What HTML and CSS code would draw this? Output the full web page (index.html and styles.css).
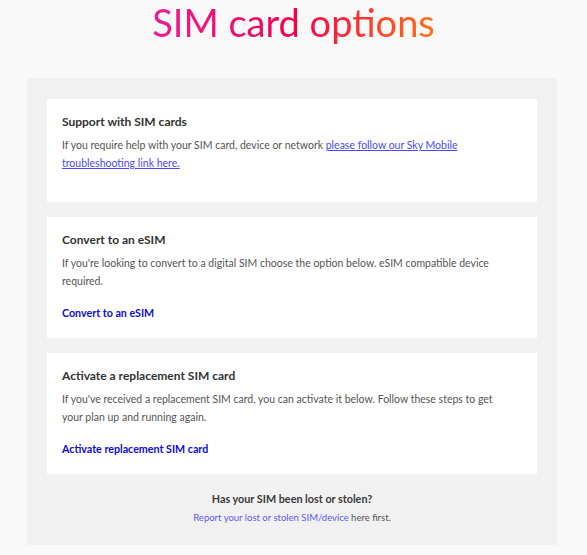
FILE: index.html
```html
<!DOCTYPE html>
<html lang="en">
<head>
<meta charset="utf-8">
<title>SIM card options</title>
<link rel="stylesheet" href="styles.css">
</head>
<body>
<div class="page">
  <h1 class="title">SIM card options</h1>
  <div class="panel">
    <section class="card">
      <h2 class="card-title">Support with SIM cards</h2>
      <p class="card-text">If you require help with your SIM card, device or network <a class="inline-link" href="#">please follow our Sky Mobile troubleshooting link here.</a></p>
    </section>
    <section class="card">
      <h2 class="card-title">Convert to an eSIM</h2>
      <p class="card-text">If you're looking to convert to a digital SIM choose the option below. eSIM compatible device required.</p>
      <a class="action-link" href="#">Convert to an eSIM</a>
    </section>
    <section class="card">
      <h2 class="card-title">Activate a replacement SIM card</h2>
      <p class="card-text">If you've received a replacement SIM card, you can activate it below. Follow these steps to get your plan up and running again.</p>
      <a class="action-link" href="#">Activate replacement SIM card</a>
    </section>
    <div class="lost">
      <h3 class="lost-title">Has your SIM been lost or stolen?</h3>
      <p class="lost-text"><a class="lost-link" href="#">Report your lost or stolen SIM/device</a> here first.</p>
    </div>
  </div>
</div>
</body>
</html>
```
FILE: styles.css
```css
html, body {
  margin: 0;
  padding: 0;
  background: #f9f9f9;
}
body {
  font-family: Lato, "Open Sans", sans-serif;
  color: #4a4a4a;
}
.page {
  display: flex;
  flex-direction: column;
  align-items: flex-start;
}
.title {
  align-self: center;
  margin: 0;
  height: 78px;
  line-height: 44px;
  font-size: 38px;
  font-weight: 400;
  background: linear-gradient(90deg, #ee1e96 0%, #f5004c 50%, #ff7212 100%);
  -webkit-background-clip: text;
  background-clip: text;
  color: transparent;
}
.panel {
  margin-left: 27px;
  width: 530px;
  box-sizing: border-box;
  padding: 21px 20px 0 20px;
  height: 467px;
  background: #f1f1f1;
  display: flex;
  flex-direction: column;
  gap: 15px;
}
.card {
  background: #ffffff;
  padding: 13px 32px 16px 15px;
  display: flex;
  flex-direction: column;
  align-items: flex-start;
}
.card-title {
  margin: 0;
  font-size: 12px;
  line-height: 20px;
  font-weight: 700;
  color: #333333;
}
.card-text {
  margin: 4px 0 14px 0;
  font-size: 10.5px;
  line-height: 18px;
  color: #555555;
}
.inline-link {
  color: #4a4aff;
  text-decoration: underline;
}
.action-link {
  font-size: 10.7px;
  line-height: 18px;
  font-weight: 700;
  color: #0b0be0;
  text-decoration: none;
}
.lost {
  display: flex;
  flex-direction: column;
  align-items: center;
  padding-top: 1px;
}
.lost-title {
  margin: 0;
  font-size: 10.8px;
  line-height: 18px;
  font-weight: 700;
  color: #3a3a3a;
}
.lost-text {
  margin: 2px 0 0 0;
  font-size: 9.5px;
  line-height: 16px;
  color: #555555;
}
.lost-link {
  color: #5a5aff;
  text-decoration: none;
}
```
